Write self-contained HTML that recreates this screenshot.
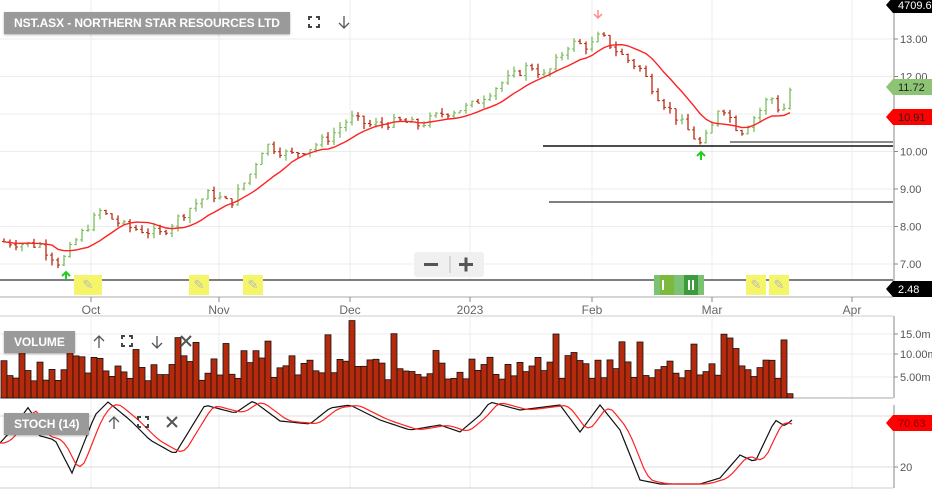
<!DOCTYPE html>
<html><head><meta charset="utf-8"><style>
body{margin:0;width:932px;height:491px;overflow:hidden;background:#fff;font-family:"Liberation Sans",sans-serif}
svg{position:absolute;left:0;top:0}
.lbl{position:absolute;background:#9a9a9a;color:#fff;font-weight:bold;font-size:12px;padding:0 10px;height:22px;line-height:22px;box-shadow:0 1px 2px rgba(0,0,0,.3);letter-spacing:-0.1px}
</style></head><body>
<svg id="s" width="932" height="491" xmlns="http://www.w3.org/2000/svg" font-family="Liberation Sans, sans-serif"></svg>
<div class="lbl" style="left:4px;top:12px">NST.ASX - NORTHERN STAR RESOURCES LTD</div>
<div class="lbl" style="left:4px;top:331px">VOLUME</div>
<div class="lbl" style="left:4px;top:413px">STOCH (14)</div>
<script>
var s=document.getElementById('s'),h='';
function L(x1,y1,x2,y2,c,w){h+='<line x1="'+x1+'" y1="'+y1+'" x2="'+x2+'" y2="'+y2+'" stroke="'+c+'" stroke-width="'+(w||1)+'"/>';}
function T(x,y,t,o){h+='<text x="'+x+'" y="'+y+'" font-size="'+(o&&o.fs||11)+'" fill="'+(o&&o.f||'#555')+'"'+(o&&o.a?' text-anchor="'+o.a+'"':'')+'>'+t+'</text>';}
var mx=[91,219,350,470,592,712,852];
mx.forEach(function(x){L(x,0,x,280,'#ececec');L(x,316,x,488,'#ececec');});
function py(p){return 39+(13-p)*37.5;}
[13,12,11,10,9,8,7].forEach(function(p){L(0,py(p),893,py(p),'#ececec');});
[334,354,377].forEach(function(y){L(0,y,893,y,'#ececec');});
[416,467].forEach(function(y){L(0,y,893,y,'#dcdcdc');});
L(0,280,893,280,'#555',1.5);L(0,297,893,297,'#aaa');L(0,316,893,316,'#ccc');
L(0,398,893,398,'#aaa');L(0,488,893,488,'#ccc');
L(894,0,894,297,'#888');L(894,316,894,398,'#888');L(894,405,894,488,'#888');
[13,12,11,10,9,8,7].forEach(function(p){L(894,py(p),898,py(p),'#888');T(900,py(p)+4,p.toFixed(2));});
['Oct','Nov','Dec','2023','Feb','Mar','Apr'].forEach(function(t,i){L(mx[i],297,mx[i],302,'#888');T(mx[i],314,t,{fs:12,a:'middle',f:'#666'});});
[[334,'15.0m'],[354,'10.00m'],[377,'5.00m']].forEach(function(a){L(894,a[0],898,a[0],'#888');T(900,a[0]+4,a[1]);});
L(894,467,898,467,'#888');T(900,471,'20');
var wp=[[0,7.6],[40,7.5],[60,7.0],[75,7.6],[100,8.4],[125,8.0],[160,7.8],[190,8.5],[210,8.9],[230,8.6],[250,9.4],[265,10.2],[290,9.9],[310,10.1],[330,10.4],[350,10.9],[370,10.7],[400,10.8],[420,10.7],[440,11.0],[470,11.2],[500,11.8],[530,12.3],[545,12.0],[570,12.9],[590,12.8],[600,13.1],[620,12.6],[640,12.2],[660,11.4],[680,10.8],[700,10.2],[710,10.5],[720,11.3],[740,10.5],[760,11.1],[770,11.5],[782,11.0],[792,11.8]];
function interp(a,x){for(var i=1;i<a.length;i++)if(x<=a[i][0]){var t=(x-a[i-1][0])/(a[i][0]-a[i-1][0]);return a[i-1][1]+t*(a[i][1]-a[i-1][1]);}return a[a.length-1][1];}
var seed=7;function r(){seed=(seed*9301+49297)%233280;return seed/233280;}
var cl=[],xs=[],prev=7.6;
for(var x=4;x<=792;x+=6){var c=interp(wp,x)+(r()-.5)*.25;xs.push(x);
 var hi=Math.max(c,prev)+r()*.15,lo=Math.min(c,prev)-r()*.15,col=c>=prev?'#7dbb5e':'#b82a10';
 L(x,py(hi),x,py(lo),col,1.3);L(x-2,py(prev),x,py(prev),col);L(x,py(c),x+2,py(c),col);cl.push(c);prev=c;}
var m='';for(var i=0;i<cl.length;i++){var sm=0,n=0;for(var j=Math.max(0,i-9);j<=i;j++){sm+=cl[j];n++;}var v=sm/n;if(i<9)v=7.6+(v-7.6)*0.6;m+=(i?'L':'M')+xs[i]+' '+py(v).toFixed(1);}
h+='<path d="'+m+'" fill="none" stroke="#f22" stroke-width="1.4"/>';
L(543,146,893,146,'#111',1.5);L(730,142,893,142,'#666',1.5);L(549,202,893,202,'#555',1.5);
function up(x,y,c){h+='<path d="M'+x+' '+(y+8)+'V'+y+'M'+(x-4)+' '+(y+4)+'L'+x+' '+y+'L'+(x+4)+' '+(y+4)+'" stroke="'+c+'" stroke-width="2" fill="none"/>';}
up(66,272,'#2c2');up(701,152,'#2c2');
h+='<path d="M598 10V18M594 14L598 18L602 14" stroke="#f88" stroke-width="1.5" fill="none"/>';
[[74,28],[189,20],[243,20],[746,20],[769,20]].forEach(function(a){h+='<rect x="'+a[0]+'" y="275" width="'+a[1]+'" height="20" fill="#f5f56a"/>';T(a[0]+a[1]/2,289,'✎',{a:'middle',f:'#bbb',fs:13});});
h+='<rect x="654" y="275" width="50" height="20" fill="#7cc274"/><rect x="660" y="275" width="14" height="20" fill="#7cba3e"/><rect x="684" y="275" width="14" height="20" fill="#3d9a3d"/>';
L(663,280,663,290,'#fff',2);L(689,280,689,290,'#fff',2);L(693,280,693,290,'#fff',2);
h+='<rect x="414" y="252" width="70" height="25" rx="3" fill="#f0f0f0"/><rect x="424" y="263" width="14" height="3" fill="#555"/><rect x="459" y="263" width="14" height="3" fill="#555"/><rect x="464.5" y="257.5" width="3" height="14" fill="#555"/>';L(450,256,450,273,'#bbb');
function tag(y,t,bg,fc){h+='<path d="M886 '+y+'L893 '+(y-8)+'H932V'+(y+8)+'H893Z" fill="'+bg+'"/>';T(898,y+4,t,{f:fc});}
tag(5,'4709.61','#000','#fff');tag(87,'11.72','#8cc474','#222');tag(117,'10.91','#f00','#222');tag(289,'2.48','#000','#fff');tag(423,'70.63','#f00','#800');
var vb='';for(var i=0;i<xs.length;i++){var v=4+r()*6;if(r()<.12)v+=5;if(i==58)v=18;if(i==131)v=1;if(i==130)v=13.5;if(i==40||i==42)v=11;var y=398-v*4.3;vb+='<rect x="'+(xs[i]-3)+'" y="'+y.toFixed(1)+'" width="6" height="'+(398-y).toFixed(1)+'" fill="#b52a0c" stroke="#111" stroke-width="0.8"/>';}
h+=vb;
var sk=[[0,443],[10,432],[30,405],[37,435],[55,440],[72,473],[95,415],[108,402],[130,420],[150,440],[175,454],[205,405],[235,413],[253,401],[280,421],[310,424],[330,408],[350,405],[380,420],[410,430],[440,425],[460,432],[480,415],[490,402],[520,410],[560,405],[580,432],[600,405],[620,430],[640,480],[660,484],[700,484],[720,478],[740,455],[755,462],[775,420],[785,426],[792,420]];
var k='',d='';for(var x=0;x<=792;x+=4){k+=(x?'L':'M')+x+' '+interp(sk,x).toFixed(1);var sm=0;for(var j=0;j<4;j++)sm+=interp(sk,Math.max(0,x-4-j*3));d+=(x?'L':'M')+x+' '+(sm/4).toFixed(1);}
h+='<path d="'+k+'" fill="none" stroke="#111" stroke-width="1.2"/><path d="'+d+'" fill="none" stroke="#f22" stroke-width="1.2"/>';
function full(x,y){h+='<path d="M'+x+' '+(y+3)+'V'+y+'H'+(x+3)+'M'+(x+7)+' '+y+'H'+(x+10)+'V'+(y+3)+'M'+(x+10)+' '+(y+7)+'V'+(y+10)+'H'+(x+7)+'M'+(x+3)+' '+(y+10)+'H'+x+'V'+(y+7)+'" stroke="#444" stroke-width="2" fill="none"/>';}
function arr(x,y,dn){h+=dn?'<path d="M'+x+' '+y+'V'+(y+12)+'M'+(x-5)+' '+(y+7)+'L'+x+' '+(y+12)+'L'+(x+5)+' '+(y+7)+'" stroke="#555" stroke-width="1.3" fill="none"/>':'<path d="M'+x+' '+(y+12)+'V'+y+'M'+(x-5)+' '+(y+5)+'L'+x+' '+y+'L'+(x+5)+' '+(y+5)+'" stroke="#555" stroke-width="1.3" fill="none"/>';}
function xx(x,y){h+='<path d="M'+x+' '+y+'L'+(x+10)+' '+(y+10)+'M'+(x+10)+' '+y+'L'+x+' '+(y+10)+'" stroke="#555" stroke-width="2"/>';}
full(309,17);arr(344,16,1);
arr(99,336,0);full(122,336);arr(157,336,1);xx(181,336);
arr(114,417,0);full(138,417);xx(167,417);
s.innerHTML=h;
</script>
</body></html>
